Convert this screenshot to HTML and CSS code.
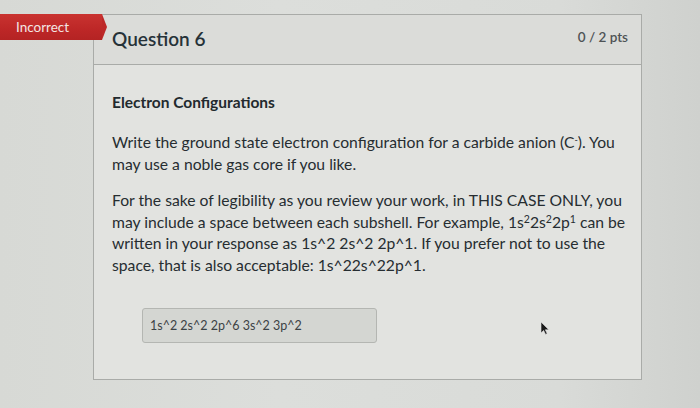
FILE: index.html
```html
<!DOCTYPE html>
<html>
<head>
<meta charset="utf-8">
<link rel="stylesheet" href="styles.css">
</head>
<body>
<div class="page">
  <div class="tag">Incorrect</div>
  <div class="card">
    <div class="header">
      <div class="title">Question 6</div>
      <div class="pts">0 / 2 pts</div>
    </div>
    <div class="content">
      <p class="heading">Electron Configurations</p>
      <p class="para">Write the ground state electron configuration for a carbide anion (C<sup class="minus">-</sup>). You may use a noble gas core if you like.</p>
      <p class="para">For the sake of legibility as you review your work, in THIS CASE ONLY, you may include a space between each subshell. For example, 1s<sup>2</sup>2s<sup>2</sup>2p<sup>1</sup> can be written in your response as 1s^2 2s^2 2p^1. If you prefer not to use the space, that is also acceptable: 1s^22s^22p^1.</p>
      <div class="answer-row">
        <div class="answer">1s^2 2s^2 2p^6 3s^2 3p^2</div>
        <svg class="cursor" width="10" height="14" viewBox="0 0 10 14"><path d="M1 1 L1 12 L3.6 9.4 L5.6 13.4 L7.2 12.6 L5.3 8.8 L8.8 8.8 Z" fill="#1a1a1a" stroke="#e5e5e5" stroke-width="0.6"/></svg>
      </div>
    </div>
  </div>
</div>
</body>
</html>
```

FILE: styles.css
```css
html, body {
  margin: 0;
  padding: 0;
}
body {
  width: 700px;
  height: 408px;
  overflow: hidden;
  background: linear-gradient(90deg, #d7d9d5 0%, #dcdedb 40%, #d9dbd8 80%, #cfd1ce 100%);
  font-family: Lato, "Open Sans", sans-serif;
  color: #2b3236;
}
.page {
  position: relative;
  padding: 14px 0 0 93px;
}
.tag {
  position: absolute;
  left: 0;
  top: 14px;
  height: 26px;
  width: 102px;
  background: linear-gradient(180deg, #c93330 0%, #bd2727 60%, #b42323 100%);
  color: #f3e6e4;
  font-size: 13.5px;
  line-height: 26px;
  padding-left: 16px;
  box-sizing: border-box;
  z-index: 2;
}
.tag::after {
  content: "";
  position: absolute;
  right: -5px;
  top: 0;
  border-top: 13px solid transparent;
  border-bottom: 13px solid transparent;
  border-left: 5px solid #bd2828;
}
.card {
  width: 549px;
  height: 366px;
  border: 1px solid #a9aba8;
  background: #e2e3e0;
  box-sizing: border-box;
}
.header {
  height: 50px;
  display: flex;
  justify-content: space-between;
  align-items: center;
  padding: 0 13px 0 18px;
  background: #dbdcd9;
  border-bottom: 1px solid #a9aba8;
  box-sizing: border-box;
}
.title {
  font-size: 19px;
  font-weight: 600;
  color: #263238;
  margin-top: -3px;
}
.pts {
  font-size: 13.5px;
  font-weight: 600;
  color: #4e5355;
  margin-top: -6px;
}
.content {
  padding: 26px 14px 0 18px;
}
.heading {
  margin: 0 0 19px 0;
  font-size: 15.5px;
  font-weight: 700;
  color: #222a2e;
  line-height: 22px;
}
.para {
  margin: 0 0 15px 0;
  font-size: 15.7px;
  line-height: 21.6px;
  color: #262d31;
}
sup {
  font-size: 10.5px;
  line-height: 0;
  vertical-align: 5px;
}
.minus {
  font-size: 9px;
}
.answer-row {
  display: flex;
  align-items: flex-start;
  padding-left: 30px;
  margin-top: 31px;
}
.answer {
  width: 235px;
  height: 35px;
  box-sizing: border-box;
  border: 1px solid #b4b6b2;
  border-radius: 3px;
  background: #d4d6d2;
  font-size: 12.5px;
  color: #3c4245;
  line-height: 33px;
  padding-left: 7px;
}
.cursor {
  margin-left: 163px;
  margin-top: 13px;
}
```
